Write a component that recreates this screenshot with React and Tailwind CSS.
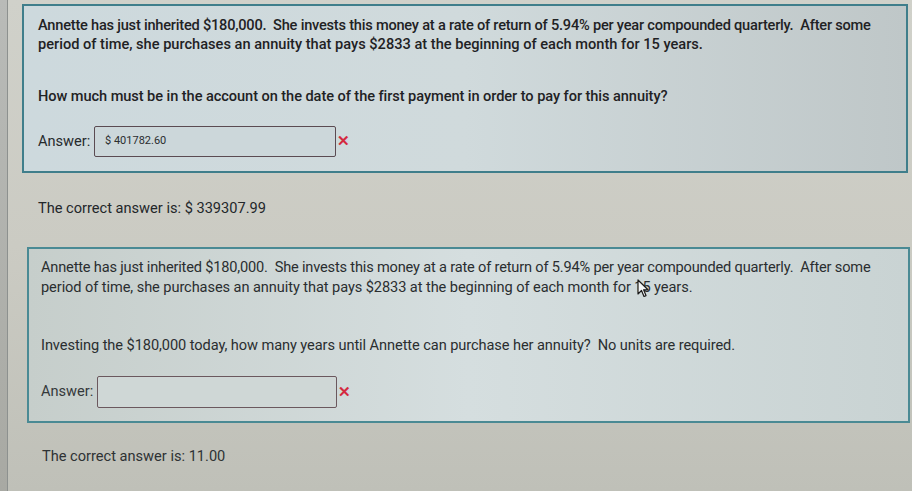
export default function App() {
  return (
    <div className="w-[912px] h-[491px] overflow-hidden flex bg-linear-to-b from-[#d0d1ca] via-[#cbcbc3] to-[#bfc0b8] font-['Roboto',_'Liberation_Sans',_sans-serif] text-[14.6px]">
      <div className="w-[8px] shrink-0 bg-linear-to-b from-[#b9bbb8] to-[#a8a9a3] border-r border-[#8d918f]"></div>
      <div className="flex flex-col flex-1">
        {/* Question 1 */}
        <div className="mt-[4px] ml-[14px] w-[886px] h-[169px] border-2 border-[#3f7e8b] bg-linear-to-r from-[#cdd9dd] via-[#d0dadc] to-[#bfc7c8] pl-[14px] pt-[10px] text-[#1f2224] font-medium">
          <p className="leading-[19px] whitespace-nowrap">
            <span className="tracking-[-0.22px]">
              Annette has just inherited $180,000.&nbsp; She invests this money at a rate of return of 5.94% per year compounded quarterly.&nbsp; After some
            </span>
            <br />
            period of time, she purchases an annuity that pays $2833 at the beginning of each month for 15 years.
          </p>
          <p className="mt-[33px] leading-[19px] whitespace-nowrap tracking-[-0.07px]">
            How much must be in the account on the date of the first payment in order to pay for this annuity?
          </p>
          <div className="mt-[20px] flex items-center">
            <span className="w-[56px] font-normal text-[#262a2c]">Answer:</span>
            <div className="w-[242px] h-[31px] rounded-[2px] border border-[#5b4b52] bg-[#ccd7da] flex items-center pl-[10px] text-[11px] font-normal text-[#2b2e30]">
              $ 401782.60
            </div>
            <span className="ml-[1px] text-[#d42a3e] text-[15px] font-bold leading-none">✕</span>
          </div>
        </div>

        <div className="mt-[25px] ml-[30px] leading-[20px] text-[#23272a]">
          The correct answer is: $ 339307.99
        </div>

        {/* Question 2 */}
        <div className="mt-[29px] ml-[19px] w-[883px] h-[176px] border-2 border-[#4a8a94] bg-linear-to-r from-[#c6cecb] via-[#d5dedf] to-[#c9d3d3] pl-[12px] pt-[8px] text-[#2a2e30] relative">
          <p className="leading-[20px] whitespace-nowrap">
            <span className="tracking-[-0.18px]">
              Annette has just inherited $180,000.&nbsp; She invests this money at a rate of return of 5.94% per year compounded quarterly.&nbsp; After some
            </span>
            <br />
            <span className="tracking-[-0.08px]">
              period of time, she purchases an annuity that pays $2833 at the beginning of each month for 15 years.
            </span>
          </p>
          <p className="mt-[38px] leading-[20px] whitespace-nowrap tracking-[-0.08px]">
            Investing the $180,000 today, how many years until Annette can purchase her annuity?&nbsp; No units are required.
          </p>
          <div className="mt-[21px] flex items-center">
            <span className="w-[56px] text-[#34383a]">Answer:</span>
            <div className="w-[240px] h-[32px] rounded-[2px] border border-[#6b585e] bg-[#cfd7d6]"></div>
            <span className="ml-[1px] text-[#d42a3e] text-[15px] font-bold leading-none">✕</span>
          </div>
          <svg className="absolute left-[608px] top-[30px]" width="12" height="20" viewBox="0 0 12 20">
            <path d="M1 1 L1 15 L4.5 11.5 L7 17.5 L9 16.6 L6.6 10.8 L11 10.8 Z" fill="#f4f6f6" stroke="#1a1a1a" strokeWidth="1.2" strokeLinejoin="round" />
          </svg>
        </div>

        <div className="mt-[23px] ml-[34px] leading-[20px] text-[#2e3234]">
          The correct answer is: 11.00
        </div>
      </div>
    </div>
  );
}
